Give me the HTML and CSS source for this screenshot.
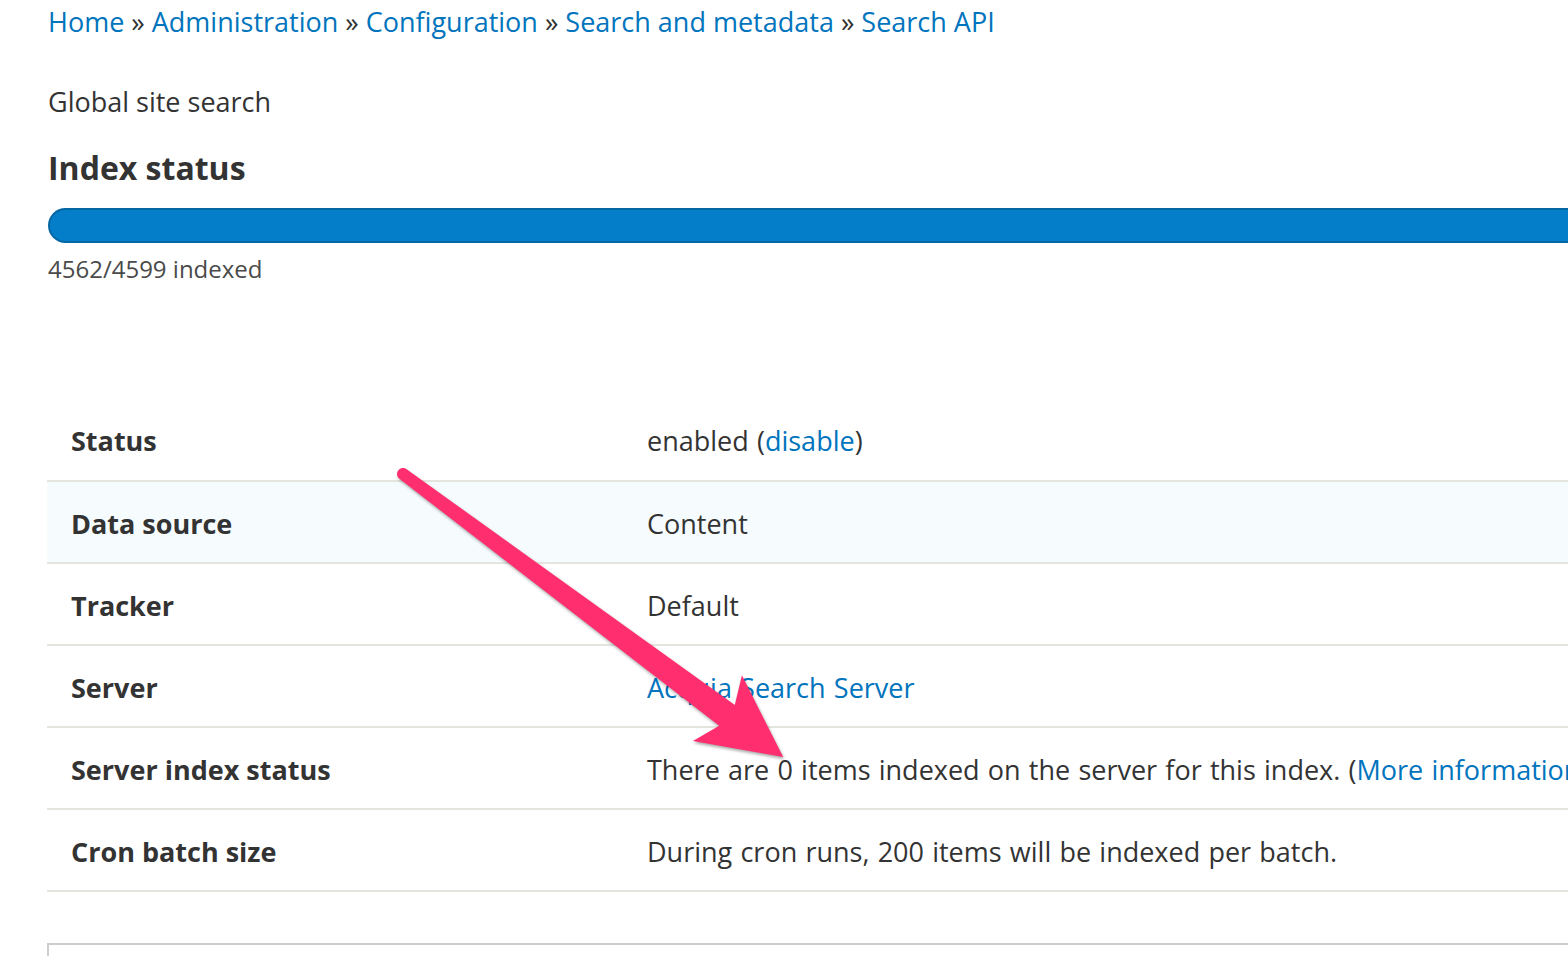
FILE: index.html
```html
<!DOCTYPE html>
<html lang="en">
<head>
  <meta charset="UTF-8">
  <title>Global site search | Index status</title>
  <link rel="stylesheet" href="styles.css">
</head>
<body>
  <div class="page">
    <!-- Breadcrumb -->
    <nav class="breadcrumb">
      <a href="#">Home</a> » <a href="#">Administration</a> » <a href="#">Configuration</a> » <a href="#">Search and metadata</a> » <a href="#">Search API</a>
    </nav>

    <p class="index-name">Global site search</p>

    <h2 class="section-title">Index status</h2>
    <div class="progress">
      <div class="progress-bar" style="width: 99.2%"></div>
    </div>
    <div class="progress-label">4562/4599 indexed</div>

    <!-- Index info -->
    <table class="info-table">
      <tbody>
        <tr>
          <th>Status</th>
          <td>enabled (<a href="#">disable</a>)</td>
        </tr>
        <tr class="highlight">
          <th>Data source</th>
          <td>Content</td>
        </tr>
        <tr>
          <th>Tracker</th>
          <td>Default</td>
        </tr>
        <tr>
          <th>Server</th>
          <td><a href="#">Acquia Search Server</a></td>
        </tr>
        <tr>
          <th>Server index status</th>
          <td>There are 0 items indexed on the server for this index. (<a href="#">More information</a>)</td>
        </tr>
        <tr>
          <th>Cron batch size</th>
          <td>During cron runs, 200 items will be indexed per batch.</td>
        </tr>
      </tbody>
    </table>

    <div class="next-box"></div>

    <!-- Annotation arrow -->
    <svg class="annotation" width="1568" height="956" viewBox="0 0 1568 956">
      <path d="M406.6 469.2 L734.8 704.9 L741.9 675.2 L783.2 757.1 L692.9 741.0 L719.2 725.7 L399.4 478.8 A6 6 0 0 1 406.6 469.2 Z" fill="#ff2e6e"/>
    </svg>
  </div>
</body>
</html>
```

FILE: styles.css
```css
/* General */
body {
  margin: 0;
  font-family: "Open Sans", "DejaVu Sans", sans-serif;
  color: #333;
  background: #fff;
  overflow: hidden;
}

a {
  color: #0074bd;
  text-decoration: none;
}

.page {
  position: relative;
  width: 1700px;
  padding-left: 47px;
}

/* Header bits */
.breadcrumb {
  font-size: 27px;
  line-height: 44px;
  padding-left: 1px;
}

.index-name {
  font-size: 27px;
  line-height: 40px;
  margin: 38px 0 0;
  padding-left: 1px;
}

.section-title {
  font-size: 32px;
  font-weight: bold;
  line-height: 44px;
  margin: 24px 0 0;
  padding-left: 1px;
}

/* Progress */
.progress {
  margin-top: 18px;
  height: 35px;
  padding-left: 1px;
}

.progress-bar {
  box-sizing: border-box;
  height: 35px;
  background: #057ec9;
  border: 2px solid #0566a4;
  border-right: none;
  border-radius: 18px 0 0 18px;
}

.progress-label {
  font-size: 24px;
  line-height: 34px;
  color: #4a4a4a;
  margin-top: 9px;
  padding-left: 1px;
}

/* Table */
.info-table {
  width: 1653px;
  margin-top: 113px;
  border-collapse: collapse;
  font-size: 27px;
}

.info-table tr {
  border-bottom: 2px solid #e5e5df;
  height: 82px;
}

.info-table tr.highlight {
  background: #f6fbfe;
}

.info-table th,
.info-table td {
  text-align: left;
  white-space: nowrap;
  padding: 2px 24px 0;
}

.info-table th {
  width: 528px;
  font-weight: bold;
}

.info-table td {
  word-spacing: 1.2px;
}

.next-box {
  margin-top: 51px;
  height: 40px;
  border: 2px solid #cdcdcd;
  border-right: none;
}

/* Arrow on top */
.annotation {
  position: absolute;
  top: 0;
  left: 0;
  pointer-events: none;
  filter: drop-shadow(1px 2px 1.5px rgba(0, 0, 0, 0.35));
}
```
